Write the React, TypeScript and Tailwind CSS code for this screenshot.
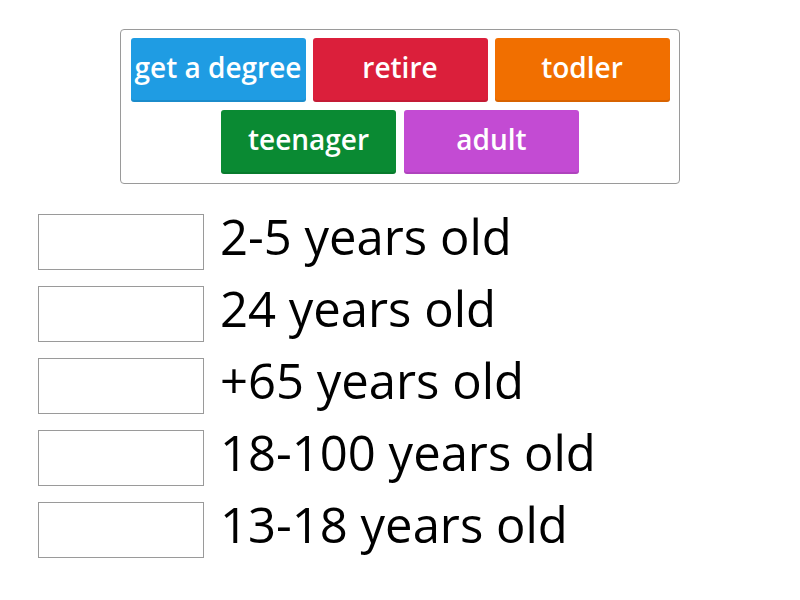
const tiles = [
  { label: 'get a degree', cls: 'bg-[#1f9ce3]' },
  { label: 'retire', cls: 'bg-[#db1f3b]' },
  { label: 'todler', cls: 'bg-[#f16f00]' },
  { label: 'teenager', cls: 'bg-[#0a8a33]' },
  { label: 'adult', cls: 'bg-[#c34bd3]' },
]

const rows = ['2-5 years old', '24 years old', '+65 years old', '18-100 years old', '13-18 years old']

function Tile({ label, cls }: { label: string; cls: string }) {
  return (
    <div
      className={`${cls} w-[175px] h-[64px] rounded-[3px] flex items-center justify-center pb-[6px] text-white text-[28px] font-semibold leading-none shadow-[inset_0_-2px_0_rgba(0,0,0,0.1)]`}
    >
      {label}
    </div>
  )
}

export default function App() {
  return (
    <div className="w-[800px] h-[600px] bg-white font-['Open_Sans',sans-serif] pt-[29px]">
      <div className="ml-[120px] w-[560px] h-[155px] border border-[#9a9a9a] rounded-[4px] pt-[8px] flex flex-col items-center gap-[8px]">
        <div className="flex gap-[7px]">
          {tiles.slice(0, 3).map((t) => (
            <Tile key={t.label} {...t} />
          ))}
        </div>
        <div className="flex gap-[8px]">
          {tiles.slice(3).map((t) => (
            <Tile key={t.label} {...t} />
          ))}
        </div>
      </div>
      <div className="mt-[30px] ml-[38px] flex flex-col gap-[17px]">
        {rows.map((r) => (
          <div key={r} className="flex items-center h-[55px]">
            <div className="w-[166px] h-[56px] border border-[#9a9a9a] shrink-0" />
            <span className="ml-[16px] mb-[10px] text-[49px] leading-none text-black">{r}</span>
          </div>
        ))}
      </div>
    </div>
  )
}
